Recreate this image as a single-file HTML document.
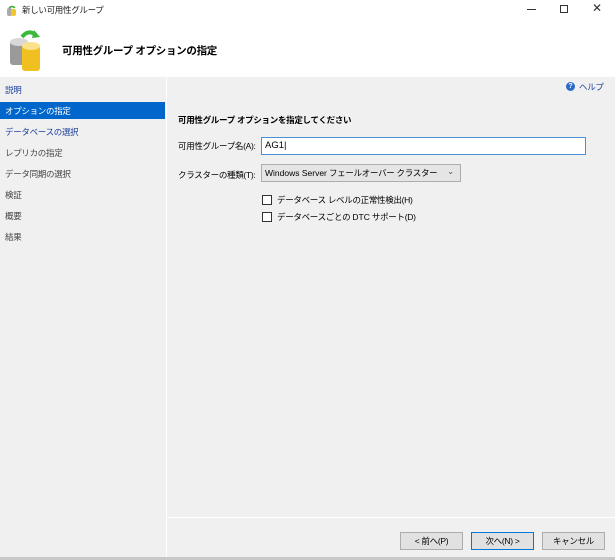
<!DOCTYPE html>
<html><head><meta charset="utf-8"><style>
*{margin:0;padding:0;box-sizing:border-box}
body{width:615px;height:560px;position:relative;overflow:hidden;background:#f0f0f0;font-family:"Liberation Sans","Noto Sans CJK JP",sans-serif;font-size:8.5px;letter-spacing:-0.3px;color:#000}
.a{position:absolute;white-space:nowrap}
.nav{left:5px;color:#444}
.btn{position:absolute;top:532px;height:18px;width:63px;background:#e1e1e1;border:1px solid #adadad;text-align:center;line-height:16px}
.cb{position:absolute;width:10px;height:10px;border:1px solid #333;background:#fff}
</style></head><body>
<div class="a" style="left:0;top:0;width:615px;height:77px;background:#fff"></div>
<svg class="a" style="left:6px;top:5px" width="12" height="12" viewBox="0 0 12 12"><rect x="1" y="3" width="5" height="8" rx="2" fill="#aaa"/><rect x="5" y="4" width="5" height="7" rx="2" fill="#f2c530"/><path d="M3 3 Q6 0 9 3" stroke="#3a3" fill="none" stroke-width="1.5"/></svg>
<div class="a" style="left:22px;top:4px;color:#222">新しい可用性グループ</div>
<div class="a" style="left:527px;top:9px;width:9px;height:1px;background:#333"></div>
<div class="a" style="left:560px;top:5px;width:8px;height:8px;border:1px solid #333"></div>
<div class="a" style="left:592px;top:1px;font-size:12px;color:#333">✕</div>
<svg class="a" style="left:8px;top:27px" width="40" height="46" viewBox="0 0 40 46">
<path d="M14 10 Q20 2 28 8" stroke="#3cb83c" stroke-width="4" fill="none"/><path d="M26 3 L32 10 L24 11Z" fill="#3cb83c"/>
<rect x="2" y="14" width="18" height="24" rx="3" fill="#9a9a9a"/><ellipse cx="11" cy="15" rx="9" ry="4" fill="#d8d8d8"/>
<rect x="14" y="18" width="18" height="26" rx="3" fill="#f0c020"/><ellipse cx="23" cy="19" rx="9" ry="4" fill="#fbe28a"/>
</svg>
<div class="a" style="left:62px;top:43px;font-size:10.5px;font-weight:bold;letter-spacing:-0.3px">可用性グループ オプションの指定</div>
<div class="a" style="left:166px;top:77px;width:1px;height:483px;background:#fff"></div>
<div class="a" style="left:0;top:102px;width:165px;height:17px;background:#0066cc"></div>
<div class="a nav" style="top:84px;color:#1a3e9c">説明</div>
<div class="a nav" style="top:105px;color:#fff">オプションの指定</div>
<div class="a nav" style="top:126px;color:#1a3e9c">データベースの選択</div>
<div class="a nav" style="top:147px">レプリカの指定</div>
<div class="a nav" style="top:168px">データ同期の選択</div>
<div class="a nav" style="top:189px">検証</div>
<div class="a nav" style="top:210px">概要</div>
<div class="a nav" style="top:231px">結果</div>
<div class="a" style="left:566px;top:82px;width:9px;height:9px;border-radius:50%;background:#2a6bc8;color:#fff;font-size:7px;line-height:9px;text-align:center;font-weight:bold;letter-spacing:0">?</div>
<div class="a" style="left:579px;top:81px;color:#1a3e9c">ヘルプ</div>
<div class="a" style="left:178px;top:114px;font-weight:bold">可用性グループ オプションを指定してください</div>
<div class="a" style="left:178px;top:140px">可用性グループ名(A):</div>
<div class="a" style="left:261px;top:137px;width:325px;height:18px;background:#fff;border:1px solid #4a90d9;padding-left:3px;line-height:16px;font-size:9.5px;letter-spacing:0">AG1|</div>
<div class="a" style="left:178px;top:169px">クラスターの種類(T):</div>
<div class="a" style="left:261px;top:164px;width:200px;height:18px;background:#e5e5e5;border:1px solid #adadad;padding-left:3px;line-height:16px"><span style="letter-spacing:0">Windows Server</span> フェールオーバー クラスター<span style="position:absolute;right:6px;top:-2px;color:#555">⌄</span></div>
<div class="cb" style="left:262px;top:195px"></div>
<div class="a" style="left:277px;top:194px">データベース レベルの正常性検出(H)</div>
<div class="cb" style="left:262px;top:212px"></div>
<div class="a" style="left:277px;top:211px">データベースごとの <span style="letter-spacing:0">DTC</span> サポート(D)</div>
<div class="a" style="left:167px;top:517px;width:448px;height:1px;background:#fff"></div>
<div class="btn" style="left:400px">&lt; 前へ(P)</div>
<div class="btn" style="left:471px;border:1px solid #0078d7">次へ(N) &gt;</div>
<div class="btn" style="left:542px">キャンセル</div>
<div class="a" style="left:0;top:557px;width:615px;height:3px;background:#c8c8c8"></div>
</body></html>
